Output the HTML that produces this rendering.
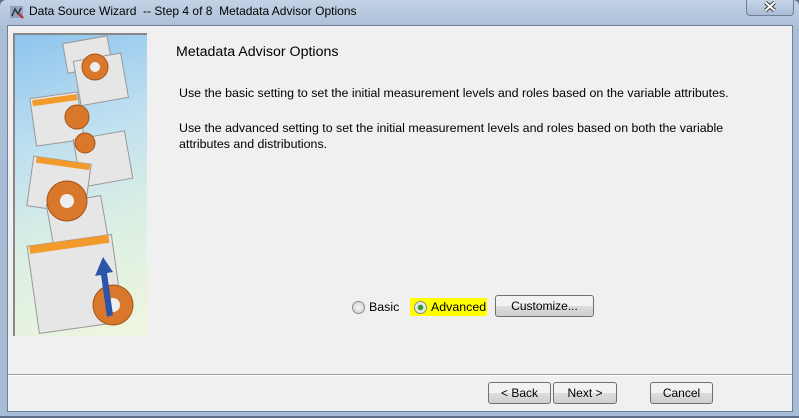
<!DOCTYPE html><html><head><style>
body{margin:0;width:799px;height:418px;overflow:hidden;background:#5d6f86;font-family:"Liberation Sans",sans-serif;}
.frame{position:absolute;left:0;top:0;width:799px;height:416px;background:linear-gradient(#c3d2e5,#a9bdd6 30px,#a7bcd6);border-radius:6px 6px 0 0}
.title{position:absolute;left:29px;top:4px;font-size:12px;color:#000;white-space:pre}
.client{position:absolute;left:7px;top:25px;width:784px;height:385px;background:#f0f0f0;border:1px solid #6d7f95}
.cb{position:absolute;left:746px;top:-1px;width:46px;height:16px;border:1px solid #6e7f94;border-top:none;border-radius:0 0 4px 4px;background:linear-gradient(#c8d6e8,#aabdd6)}
.img{position:absolute;left:13px;top:33px;width:134px;height:303px;border-left:2px solid #888;border-top:2px solid #888;box-sizing:border-box;background:linear-gradient(160deg,#8ec4ee 0%,#bfe0f0 35%,#dcefe3 65%,#eef6df 100%)}
.t{position:absolute;font-size:12.4px;color:#000}
.btn{position:absolute;height:20px;border:1px solid #707070;border-radius:3px;background:linear-gradient(#f2f2f2 50%,#dddddd 50%,#cfcfcf);font-size:12px;text-align:center;line-height:20px;box-sizing:content-box}
.radio{position:absolute;width:11px;height:11px;border-radius:50%;border:1px solid #8a8a8a;background:radial-gradient(#f4f4f4,#d0d0d0)}
</style></head><body>
<div class="frame">
<svg style="position:absolute;left:9px;top:4px" width="16" height="16"><rect x="1" y="2" width="13" height="12" fill="#8fa3c0"/><path d="M3 12L6 5L9 10L12 4" stroke="#333" fill="none" stroke-width="1.5"/><path d="M10 10l4 4" stroke="#c22" stroke-width="2"/></svg>
<div class="title">Data Source Wizard  -- Step 4 of 8  Metadata Advisor Options</div>
<div class="cb"><svg style="position:absolute;left:17px;top:2px" width="12" height="11"><path d="M1.5 1.5L10.5 9.5M10.5 1.5L1.5 9.5" stroke="#3a3a3a" stroke-width="4"/><path d="M1.5 1.5L10.5 9.5M10.5 1.5L1.5 9.5" stroke="#fff" stroke-width="2"/></svg></div>
<div class="client"></div>
</div>
<div class="img">
<svg width="132" height="301" viewBox="0 0 132 301">
<g fill="#e6e6e6" stroke="#999">
<rect x="50" y="5" width="45" height="30" transform="rotate(-10 70 20)"/>
<rect x="62" y="22" width="48" height="45" transform="rotate(-10 85 45)"/>
<rect x="18" y="60" width="48" height="48" transform="rotate(-8 42 84)"/>
<rect x="62" y="100" width="52" height="48" transform="rotate(-10 88 124)"/>
<rect x="15" y="125" width="58" height="50" transform="rotate(8 44 150)"/>
<rect x="35" y="165" width="55" height="45" transform="rotate(-10 62 188)"/>
<rect x="18" y="205" width="85" height="88" transform="rotate(-8 60 250)"/>
</g>
<g fill="#f29b2c"><rect x="20" y="205" width="80" height="8" transform="rotate(-8 60 250)"/><rect x="20" y="62" width="45" height="6" transform="rotate(-8 42 84)"/><rect x="18" y="125" width="54" height="6" transform="rotate(8 44 150)"/></g>
<g fill="#d9782a" stroke="#a2541a"><circle cx="80" cy="32" r="13"/><circle cx="62" cy="82" r="12"/><circle cx="70" cy="108" r="10"/><circle cx="52" cy="166" r="20"/><circle cx="98" cy="270" r="20"/></g>
<g fill="#eee"><circle cx="80" cy="32" r="5"/><circle cx="52" cy="166" r="7"/><circle cx="98" cy="270" r="7"/></g>
<path d="M92 282L86 240L80 241L88 222L98 237L92 238L98 280Z" fill="#2a55a8"/>
</svg></div>
<div class="t" style="left:176px;top:44px;font-size:14.2px">Metadata Advisor Options</div>
<div class="t" style="left:179px;top:86px">Use the basic setting to set the initial measurement levels and roles based on the variable attributes.</div>
<div class="t" style="left:179px;top:120px;line-height:16px">Use the advanced setting to set the initial measurement levels and roles based on both the variable<br>attributes and distributions.</div>
<div class="radio" style="left:352px;top:301px"></div>
<div class="t" style="left:369px;top:300px">Basic</div>
<div style="position:absolute;left:410px;top:298px;width:77px;height:18px;background:#ffff00"></div>
<div class="radio" style="left:414px;top:301px;background:radial-gradient(#2f9a2f 30%,#e8e8e8 40%)"></div>
<div class="t" style="left:431px;top:300px">Advanced</div>
<div class="btn" style="left:495px;top:295px;width:97px">Customize...</div>
<div style="position:absolute;left:8px;top:374px;width:784px;height:1px;background:#a0a0a0"></div>
<div style="position:absolute;left:8px;top:375px;width:784px;height:1px;background:#fff"></div>
<div class="btn" style="left:488px;top:382px;width:61px">&lt; Back</div>
<div class="btn" style="left:553px;top:382px;width:62px">Next &gt;</div>
<div class="btn" style="left:650px;top:382px;width:61px">Cancel</div>
</body></html>
